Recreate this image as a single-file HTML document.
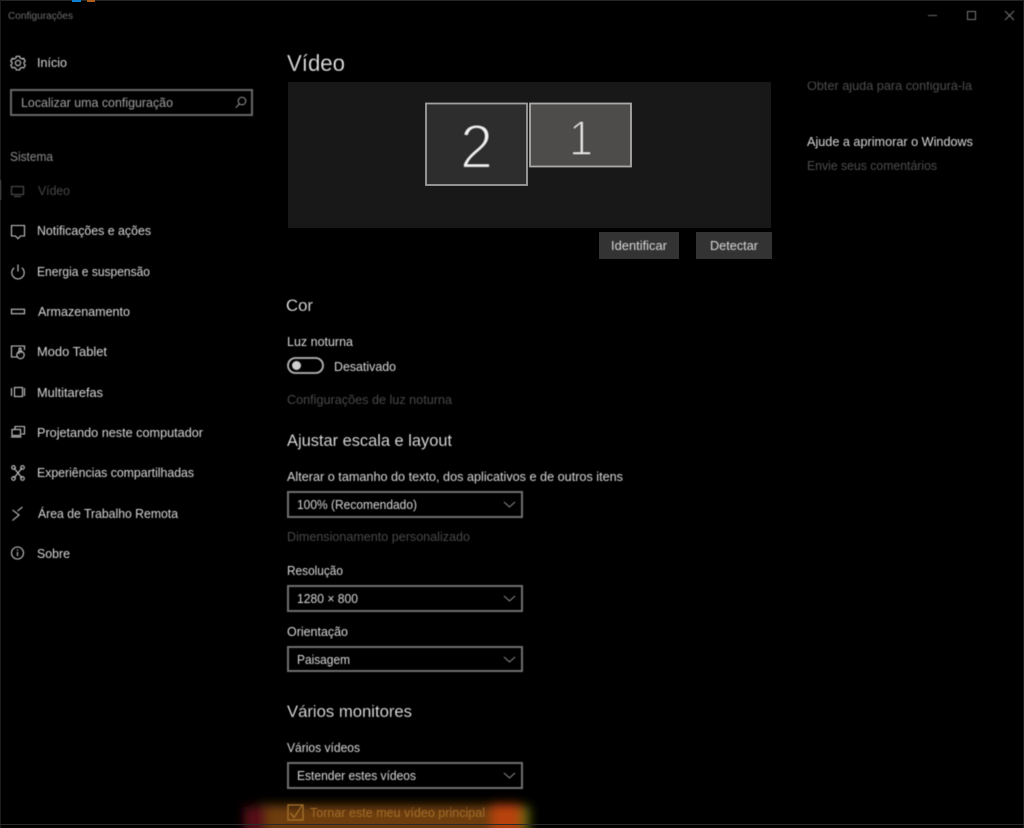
<!DOCTYPE html>
<html lang="pt"><head><meta charset="utf-8"><title>Configurações</title>
<style>
html,body{margin:0;padding:0;background:#000;width:1024px;height:828px;overflow:hidden}
svg{display:block;position:absolute;left:0;top:0}
text{font-family:"Liberation Sans",sans-serif;font-size:13px;fill:#d8d8d8}
.d{fill:#484848}
.i{fill:none;stroke:#c8c8c8;stroke-width:1.1}
.h{font-size:16.5px;fill:#e6e6e6;stroke:#000;stroke-width:.25px}
.dd{fill:none;stroke:#6e6e6e;stroke-width:2}
.ch{fill:none;stroke:#8c8c8c;stroke-width:1}
</style></head><body>
<svg width="1024" height="828" viewBox="0 0 1024 828" xmlns="http://www.w3.org/2000/svg">
<defs>
<filter id="b" filterUnits="userSpaceOnUse" x="200" y="770" width="380" height="80"><feGaussianBlur stdDeviation="5"/></filter>
<filter id="s" filterUnits="userSpaceOnUse" x="0" y="0" width="1024" height="828"><feGaussianBlur stdDeviation="0.42"/></filter>
</defs>
<rect width="1024" height="828" fill="#000"/>
<rect x="0" y="0" width="1024" height="1" fill="#262626"/>
<rect x="0" y="0" width="1" height="828" fill="#1c1c1c"/>
<rect x="1023" y="0" width="1" height="828" fill="#1c1c1c"/>
<rect x="72" y="0" width="9" height="2" fill="#0f7fd0"/><rect x="87" y="0" width="8" height="2" fill="#b0601c"/>

<!-- bottom glow -->
<g filter="url(#b)">
<rect x="258" y="805" width="250" height="30" fill="#6e3c08"/>
<rect x="244" y="807" width="22" height="28" fill="#560c12"/>
<rect x="492" y="804" width="28" height="30" fill="#b8420c"/>
<rect x="520" y="806" width="10" height="28" fill="#5c5e08"/>
</g>
<rect x="0" y="824" width="1024" height="1" fill="#2a2a2a"/>

<!-- opaque panels, kept out of the softened text layer -->
<rect x="288" y="82" width="483" height="146" fill="#181818"/>
<rect x="426" y="103.500" width="101" height="81.500" fill="#2d2d2d" stroke="#a0a0a0" stroke-width="1.800"/>
<rect x="530" y="103.500" width="101" height="63" fill="#4d4c4a" stroke="#aaa" stroke-width="1.800"/>
<rect x="599" y="232" width="80" height="27" fill="#333"/>
<rect x="696" y="232" width="76" height="27" fill="#333"/>

<g filter="url(#s)">
<!-- titlebar -->
<text x="8" y="19" style="font-size:10px;fill:#6e6e6e" textLength="65" lengthAdjust="spacingAndGlyphs">Configurações</text>
<path d="M928 15.5h9" stroke="#666" stroke-width="1"/>
<rect x="967.5" y="11.5" width="8" height="8" fill="none" stroke="#777"/>
<path d="M1005 11l9 9M1014 11l-9 9" stroke="#777" stroke-width="1"/>

<!-- sidebar -->
<g class="i">
<circle cx="18" cy="63" r="2.6"/>
<path d="M16.3 56.3h3.4l.5 1.8 1.7.8 1.8-.6 1.6 2.8-1.3 1.2v1.6l1.3 1.3-1.6 2.8-1.8-.6-1.7.9-.5 1.7h-3.4l-.5-1.7-1.7-.9-1.8.6-1.6-2.8 1.3-1.3v-1.6l-1.3-1.2 1.6-2.8 1.8.6 1.7-.8z"/>
</g>
<text x="37" y="67" textLength="30" lengthAdjust="spacingAndGlyphs">Início</text>

<rect x="11" y="90" width="241" height="25" fill="none" stroke="#686868" stroke-width="2"/>
<text x="21" y="107" textLength="152" lengthAdjust="spacingAndGlyphs" style="fill:#a0a0a0">Localizar uma configuração</text>
<g fill="none" stroke="#989898" stroke-width="1"><circle cx="242" cy="101" r="3.8"/><path d="M239.3 104l-3.6 3.8"/></g>

<text x="10" y="161" textLength="43" lengthAdjust="spacingAndGlyphs" style="fill:#8c8c8c">Sistema</text>

<rect x="0" y="180" width="1" height="20" fill="#555"/>
<g fill="none" stroke="#4a4a4a" stroke-width="1.2"><rect x="11.5" y="186.5" width="12" height="8"/><path d="M14 196.5h7"/></g>
<text class="d" x="38" y="195" textLength="32" lengthAdjust="spacingAndGlyphs">Vídeo</text>

<path class="i" d="M11.5 225.5h13v10.5h-4l-2.5 2.7-2.5-2.7h-4z"/>
<text x="37" y="235" textLength="114" lengthAdjust="spacingAndGlyphs">Notificações e ações</text>

<path class="i" d="M14.2 267.8a6.2 6.2 0 1 0 7.6 0M18 264.5v7"/>
<text x="37" y="276" textLength="113" lengthAdjust="spacingAndGlyphs">Energia e suspensão</text>

<g class="i"><rect x="11.5" y="309.3" width="13" height="4.4"/></g>
<text x="38" y="316" textLength="92" lengthAdjust="spacingAndGlyphs">Armazenamento</text>

<g class="i"><path d="M17 357h-5.5v-11h13v4"/><circle cx="20.5" cy="355" r="3.7"/><path d="M19 354v-5c0-1.300 2-1.300 2 0v4"/></g>
<text x="37" y="356" textLength="70" lengthAdjust="spacingAndGlyphs">Modo Tablet</text>

<g class="i"><rect x="14.500" y="387.500" width="8" height="9"/><path d="M11.500 388v8M24.500 388v8"/></g>
<text x="37" y="397" textLength="66" lengthAdjust="spacingAndGlyphs">Multitarefas</text>

<g class="i"><path d="M15 429v-2.500h9.500v7.500h-3"/><rect x="12" y="429.500" width="8.500" height="6"/><path d="M11 437h10.500"/></g>
<text x="37" y="437" textLength="166" lengthAdjust="spacingAndGlyphs">Projetando neste computador</text>

<g class="i"><path d="M14 468l8 10M22 468l-8 10"/><circle cx="13.500" cy="467.500" r="1.800"/><circle cx="22.500" cy="467.500" r="1.800"/><circle cx="13.500" cy="478.500" r="1.800"/><circle cx="22.500" cy="478.500" r="1.800"/></g>
<text x="37" y="477" textLength="157" lengthAdjust="spacingAndGlyphs">Experiências compartilhadas</text>

<path class="i" d="M12.500 510l6.500 5-6.500 5.500M22.500 507l-5 4"/>
<text x="38" y="518" textLength="140" lengthAdjust="spacingAndGlyphs">Área de Trabalho Remota</text>

<g class="i"><circle cx="17.500" cy="553" r="6"/><path d="M17.500 552v4M17.500 549.500v1.200"/></g>
<text x="37" y="558" textLength="33" lengthAdjust="spacingAndGlyphs">Sobre</text>

<!-- main -->
<text x="287" y="71" textLength="58" lengthAdjust="spacingAndGlyphs" style="font-size:23px;fill:#e8e8e8;stroke:#000;stroke-width:.5px">Vídeo</text>
<text x="476.500" y="168" text-anchor="middle" style="font-size:62px;fill:#f4f4f4;stroke:#2d2d2d;stroke-width:2.400px" textLength="33" lengthAdjust="spacingAndGlyphs">2</text>
<text x="581" y="155" text-anchor="middle" style="font-size:49px;fill:#ececec;stroke:#4d4c4a;stroke-width:2px" textLength="24" lengthAdjust="spacingAndGlyphs">1</text>

<text x="611" y="250" textLength="56" lengthAdjust="spacingAndGlyphs">Identificar</text>
<text x="710" y="250" textLength="48" lengthAdjust="spacingAndGlyphs">Detectar</text>

<text class="h" x="286" y="311" textLength="27" lengthAdjust="spacingAndGlyphs">Cor</text>
<text x="287" y="346" textLength="66" lengthAdjust="spacingAndGlyphs">Luz noturna</text>
<rect x="288" y="358" width="35" height="15" rx="7.500" fill="none" stroke="#b8b8b8" stroke-width="1.800"/>
<circle cx="296.500" cy="365.500" r="4.500" fill="#d0d0d0"/>
<text x="334" y="371" textLength="62" lengthAdjust="spacingAndGlyphs">Desativado</text>
<text class="d" x="287" y="404" textLength="165" lengthAdjust="spacingAndGlyphs">Configurações de luz noturna</text>

<text class="h" x="287" y="446" textLength="165" lengthAdjust="spacingAndGlyphs">Ajustar escala e layout</text>
<text x="287" y="481" textLength="336" lengthAdjust="spacingAndGlyphs">Alterar o tamanho do texto, dos aplicativos e de outros itens</text>
<rect x="288" y="492" width="234" height="25" class="dd"/>
<text x="297" y="509" textLength="120" lengthAdjust="spacingAndGlyphs">100% (Recomendado)</text>
<path class="ch" d="M504 502l5.500 5 5.500-5"/>
<text class="d" x="287" y="541" textLength="183" lengthAdjust="spacingAndGlyphs">Dimensionamento personalizado</text>

<text x="287" y="575" textLength="56" lengthAdjust="spacingAndGlyphs">Resolução</text>
<rect x="288" y="586" width="234" height="25" class="dd"/>
<text x="297" y="603" textLength="61" lengthAdjust="spacingAndGlyphs">1280 × 800</text>
<path class="ch" d="M504 596l5.500 5 5.500-5"/>

<text x="287" y="636" textLength="61" lengthAdjust="spacingAndGlyphs">Orientação</text>
<rect x="288" y="647" width="234" height="24" class="dd"/>
<text x="297" y="664" textLength="53" lengthAdjust="spacingAndGlyphs">Paisagem</text>
<path class="ch" d="M504 657l5.500 5 5.500-5"/>

<text class="h" x="287" y="717" textLength="125" lengthAdjust="spacingAndGlyphs">Vários monitores</text>
<text x="287" y="752" textLength="73" lengthAdjust="spacingAndGlyphs">Vários vídeos</text>
<rect x="288" y="763" width="234" height="25" class="dd"/>
<text x="297" y="780" textLength="119" lengthAdjust="spacingAndGlyphs">Estender estes vídeos</text>
<path class="ch" d="M504 773l5.500 5 5.500-5"/>

<rect x="288" y="805" width="15" height="15" fill="none" stroke="#a0702c" stroke-width="1.400"/>
<path d="M290.500 813l3.500 4.500 8-12" fill="none" stroke="#a87830" stroke-width="1.100"/>
<text x="310" y="817" textLength="175" lengthAdjust="spacingAndGlyphs" style="fill:#a06c2c">Tornar este meu vídeo principal</text>

<!-- right column -->
<text x="807" y="90" textLength="165" lengthAdjust="spacingAndGlyphs" style="fill:#4e4e4e">Obter ajuda para configurá-la</text>
</g>
<rect x="790" y="60" width="200" height="21.500" fill="#000"/>
<g filter="url(#s)">
<text x="807" y="146" textLength="166" lengthAdjust="spacingAndGlyphs">Ajude a aprimorar o Windows</text>
<text x="807" y="170" textLength="130" lengthAdjust="spacingAndGlyphs" style="fill:#4e4e4e">Envie seus comentários</text>
</g>
</svg>
</body></html>
